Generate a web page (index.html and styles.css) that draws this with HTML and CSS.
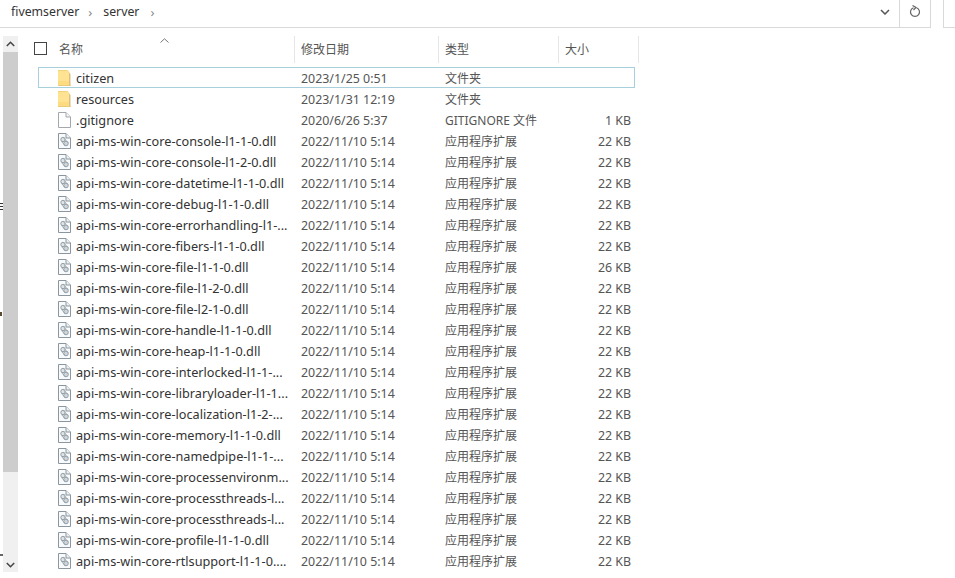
FILE: index.html
```html
<!DOCTYPE html>
<html lang="zh-CN">
<head>
<meta charset="utf-8">
<title>server</title>
<link rel="stylesheet" href="styles.css">
</head>
<body>
<svg class="defs" width="0" height="0" aria-hidden="true">
  <symbol id="folder" viewBox="0 0 13 16">
    <path d="M0 0h9.500l2 2v14H0z" fill="#ffe393"/>
    <path d="M0 0h9.500v1H0z" fill="#f3d27c"/>
    <path d="M0 11h11v5H0z" fill="#fddb80"/>
    <path d="M9.500 1l3 3v12h-1.500V3z" fill="#d9c184"/>
    <path d="M0 15.200h13V16H0z" fill="#e6c878"/>
  </symbol>
  <symbol id="file" viewBox="0 0 13 16">
    <path d="M.5.500h7.500l4.500 4.500v10.500H.5z" fill="#fff" stroke="#a4a8ac"/>
    <path d="M8 .5V5h4.500" fill="#f4f4f4" stroke="#a4a8ac"/>
  </symbol>
  <symbol id="dll" viewBox="0 0 13 16">
    <path d="M.5.500h7.500l4.500 4.500v10.500H.5z" fill="#f8fafb" stroke="#8a97a1"/>
    <path d="M8 .5V5h4.500" fill="#eef1f3" stroke="#8a97a1"/>
    <circle cx="5" cy="6.500" r="2.200" fill="#dfe3e6" stroke="#8c979f" stroke-width=".9"/>
    <circle cx="8" cy="10.500" r="2.300" fill="#cfd6db" stroke="#8c979f" stroke-width=".9"/>
    <path d="M3.500 8.500l4 4.500M6 5.500l4 4" stroke="#99a4ac" stroke-width=".9" fill="none"/>
  </symbol>
</svg>
<div class="edge-marks">
  <i class="mark m1"></i><i class="mark m2"></i><i class="mark m3"></i><i class="mark m4"></i><i class="mark m5"></i>
</div>
<div class="address">
  <div class="crumbs">
    <span>fivemserver</span><span class="sep">›</span><span>server</span><span class="sep">›</span>
    <svg class="chev" width="10" height="6" viewBox="0 0 10 6"><path d="M1 1l4 4 4-4" fill="none" stroke="#555" stroke-width="1.500"/></svg>
  </div>
  <div class="refresh">
    <svg width="12" height="13" viewBox="0 0 12 13"><path d="M4.500 2.700a4.500 4.500 0 1 0 3 0" fill="none" stroke="#666" stroke-width="1.200"/><path d="M3.500 .5L7 2.500 4.500 5" fill="none" stroke="#666" stroke-width="1.200"/></svg>
  </div>
  <div class="search"></div>
</div>
<div class="main">
  <div class="scrollbar">
    <svg class="arrow" width="9" height="6" viewBox="0 0 9 6"><path d="M.8 5L4.500 1.300 8.200 5" fill="none" stroke="#444" stroke-width="1.500"/></svg>
    <div class="thumb"></div>
    <svg class="arrow" width="9" height="6" viewBox="0 0 9 6"><path d="M.8 1L4.500 4.700 8.200 1" fill="none" stroke="#444" stroke-width="1.500"/></svg>
  </div>
  <div class="list">
    <div class="head">
      <div class="hcell hname"><span class="check"></span><span>名称</span>
        <svg class="sort" width="9" height="5" viewBox="0 0 9 5"><path d="M.5 4.500L4.500 .8 8.500 4.500" fill="none" stroke="#777"/></svg>
      </div>
      <div class="hcell hdate">修改日期</div>
      <div class="hcell htype">类型</div>
      <div class="hcell hsize">大小</div>
    </div>
    <div class="rows">
      <div class="row focus"><span class="name"><svg class="ico"><use href="#folder"/></svg>citizen</span><span class="date">2023/1/25 0:51</span><span class="type">文件夹</span><span class="size"></span></div>
      <div class="row"><span class="name"><svg class="ico"><use href="#folder"/></svg>resources</span><span class="date">2023/1/31 12:19</span><span class="type">文件夹</span><span class="size"></span></div>
      <div class="row"><span class="name"><svg class="ico"><use href="#file"/></svg>.gitignore</span><span class="date">2020/6/26 5:37</span><span class="type">GITIGNORE 文件</span><span class="size">1 KB</span></div>
      <div class="row"><span class="name"><svg class="ico"><use href="#dll"/></svg>api-ms-win-core-console-l1-1-0.dll</span><span class="date">2022/11/10 5:14</span><span class="type">应用程序扩展</span><span class="size">22 KB</span></div>
      <div class="row"><span class="name"><svg class="ico"><use href="#dll"/></svg>api-ms-win-core-console-l1-2-0.dll</span><span class="date">2022/11/10 5:14</span><span class="type">应用程序扩展</span><span class="size">22 KB</span></div>
      <div class="row"><span class="name"><svg class="ico"><use href="#dll"/></svg>api-ms-win-core-datetime-l1-1-0.dll</span><span class="date">2022/11/10 5:14</span><span class="type">应用程序扩展</span><span class="size">22 KB</span></div>
      <div class="row"><span class="name"><svg class="ico"><use href="#dll"/></svg>api-ms-win-core-debug-l1-1-0.dll</span><span class="date">2022/11/10 5:14</span><span class="type">应用程序扩展</span><span class="size">22 KB</span></div>
      <div class="row"><span class="name"><svg class="ico"><use href="#dll"/></svg>api-ms-win-core-errorhandling-l1-...</span><span class="date">2022/11/10 5:14</span><span class="type">应用程序扩展</span><span class="size">22 KB</span></div>
      <div class="row"><span class="name"><svg class="ico"><use href="#dll"/></svg>api-ms-win-core-fibers-l1-1-0.dll</span><span class="date">2022/11/10 5:14</span><span class="type">应用程序扩展</span><span class="size">22 KB</span></div>
      <div class="row"><span class="name"><svg class="ico"><use href="#dll"/></svg>api-ms-win-core-file-l1-1-0.dll</span><span class="date">2022/11/10 5:14</span><span class="type">应用程序扩展</span><span class="size">26 KB</span></div>
      <div class="row"><span class="name"><svg class="ico"><use href="#dll"/></svg>api-ms-win-core-file-l1-2-0.dll</span><span class="date">2022/11/10 5:14</span><span class="type">应用程序扩展</span><span class="size">22 KB</span></div>
      <div class="row"><span class="name"><svg class="ico"><use href="#dll"/></svg>api-ms-win-core-file-l2-1-0.dll</span><span class="date">2022/11/10 5:14</span><span class="type">应用程序扩展</span><span class="size">22 KB</span></div>
      <div class="row"><span class="name"><svg class="ico"><use href="#dll"/></svg>api-ms-win-core-handle-l1-1-0.dll</span><span class="date">2022/11/10 5:14</span><span class="type">应用程序扩展</span><span class="size">22 KB</span></div>
      <div class="row"><span class="name"><svg class="ico"><use href="#dll"/></svg>api-ms-win-core-heap-l1-1-0.dll</span><span class="date">2022/11/10 5:14</span><span class="type">应用程序扩展</span><span class="size">22 KB</span></div>
      <div class="row"><span class="name"><svg class="ico"><use href="#dll"/></svg>api-ms-win-core-interlocked-l1-1-...</span><span class="date">2022/11/10 5:14</span><span class="type">应用程序扩展</span><span class="size">22 KB</span></div>
      <div class="row"><span class="name"><svg class="ico"><use href="#dll"/></svg>api-ms-win-core-libraryloader-l1-1...</span><span class="date">2022/11/10 5:14</span><span class="type">应用程序扩展</span><span class="size">22 KB</span></div>
      <div class="row"><span class="name"><svg class="ico"><use href="#dll"/></svg>api-ms-win-core-localization-l1-2-...</span><span class="date">2022/11/10 5:14</span><span class="type">应用程序扩展</span><span class="size">22 KB</span></div>
      <div class="row"><span class="name"><svg class="ico"><use href="#dll"/></svg>api-ms-win-core-memory-l1-1-0.dll</span><span class="date">2022/11/10 5:14</span><span class="type">应用程序扩展</span><span class="size">22 KB</span></div>
      <div class="row"><span class="name"><svg class="ico"><use href="#dll"/></svg>api-ms-win-core-namedpipe-l1-1-...</span><span class="date">2022/11/10 5:14</span><span class="type">应用程序扩展</span><span class="size">22 KB</span></div>
      <div class="row"><span class="name"><svg class="ico"><use href="#dll"/></svg>api-ms-win-core-processenvironm...</span><span class="date">2022/11/10 5:14</span><span class="type">应用程序扩展</span><span class="size">22 KB</span></div>
      <div class="row"><span class="name"><svg class="ico"><use href="#dll"/></svg>api-ms-win-core-processthreads-l...</span><span class="date">2022/11/10 5:14</span><span class="type">应用程序扩展</span><span class="size">22 KB</span></div>
      <div class="row"><span class="name"><svg class="ico"><use href="#dll"/></svg>api-ms-win-core-processthreads-l...</span><span class="date">2022/11/10 5:14</span><span class="type">应用程序扩展</span><span class="size">22 KB</span></div>
      <div class="row"><span class="name"><svg class="ico"><use href="#dll"/></svg>api-ms-win-core-profile-l1-1-0.dll</span><span class="date">2022/11/10 5:14</span><span class="type">应用程序扩展</span><span class="size">22 KB</span></div>
      <div class="row"><span class="name"><svg class="ico"><use href="#dll"/></svg>api-ms-win-core-rtlsupport-l1-1-0....</span><span class="date">2022/11/10 5:14</span><span class="type">应用程序扩展</span><span class="size">22 KB</span></div>
    </div>
  </div>
</div>
</body>
</html>
```
FILE: styles.css
```css
* { box-sizing: border-box; }
html, body { margin: 0; height: 100%; }
body {
  width: 955px;
  height: 578px;
  overflow: hidden;
  background: #fff;
  font-family: "Noto Sans", "Noto Sans CJK SC", sans-serif;
  font-size: 12.4px;
  color: #3c3c3c;
}
.defs { display: block; height: 0; }
.edge-marks { position: absolute; left: 0; top: 0; }
.mark { position: absolute; left: 0; width: 3px; height: 1px; background: #333; z-index: 2; }
.m1 { top: 203px; }
.m2 { top: 206px; }
.m3 { top: 209px; }
.m4 { top: 312px; height: 4px; width: 2px; background: #5a4a30; }
.m5 { top: 554px; height: 2px; background: #666; }
.address {
  display: flex;
  height: 28px;
  align-items: stretch;
}
.crumbs {
  width: 899px;
  padding: 0 9px 4px 11px;
  display: flex;
  align-items: center;
  border-bottom: 1px solid #d9d9d9;
  color: #333;
  font-size: 12.3px;
}
.sep { margin: 0 11px 0 9px; color: #888; font-size: 13px; }
.crumbs .sep:last-of-type { margin-right: 0; margin-left: 11px; }
.chev { margin-left: auto; }
.refresh {
  width: 32px;
  display: flex;
  align-items: center;
  justify-content: center;
  padding-bottom: 4px;
  border-left: 1px solid #d9d9d9;
  border-right: 1px solid #d9d9d9;
  border-bottom: 1px solid #d9d9d9;
}
.search {
  margin-left: 12px;
  border-left: 1px solid #d9d9d9;
  border-bottom: 1px solid #d9d9d9;
  flex: 1;
}
.main {
  display: flex;
  padding: 8px 0 0 3px;
}
.scrollbar {
  width: 15px;
  height: 536px;
  background: #f0f0f0;
  display: flex;
  flex-direction: column;
  align-items: center;
}
.arrow { flex: none; margin: 5px 0; }
.thumb { width: 15px; height: 420px; background: #cdcdcd; }
.scrollbar .arrow:last-child { margin-top: auto; margin-bottom: 4px; }
.list { width: 618px; margin-left: 19px; }
.head {
  display: grid;
  grid-template-columns: 258px 144px 120px 80px;
  height: 27px;
  font-size: 12px;
}
.hcell {
  display: flex;
  align-items: center;
  padding: 0 0 2px 6px;
  border-right: 1px solid #e6e6e6;
  color: #555;
  position: relative;
}
.hname { padding-left: 0; gap: 12px; margin-left: -3px; }
.check { width: 13px; height: 13px; border: 1px solid #444; background: #fff; }
.sort { position: absolute; top: 2px; left: 126px; }
.rows { margin: 4px 0 0 1px; }
.row {
  display: grid;
  grid-template-columns: 263px 144px 150px 36px;
  height: 21px;
  width: 597px;
  align-items: center;
  white-space: nowrap;
  color: #555;
  position: relative;
}
.row.focus { box-shadow: 0 0 0 1px #a8d0dc inset; }
.name { display: flex; align-items: center; color: #333; padding-left: 20px; font-size: 12.7px; }
.ico { width: 13px; height: 16px; margin-right: 5px; flex: none; }
.date { padding-top: 1px; }
.type { font-size: 12px; }
.size { text-align: right; padding-top: 1px; }
```
